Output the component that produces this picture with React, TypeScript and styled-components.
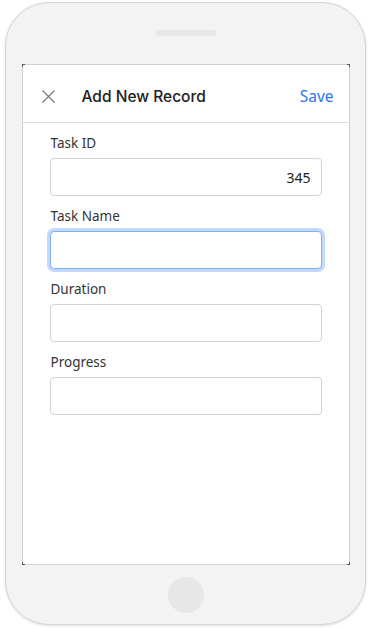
import styled, { createGlobalStyle } from "styled-components";

const GlobalStyle = createGlobalStyle`
  html, body {
    margin: 0;
    padding: 0;
    background: #ffffff;
    font-family: "Noto Sans", "Open Sans", sans-serif;
  }
  * {
    box-sizing: border-box;
  }
`;

const Page = styled.div`
  width: 370px;
  height: 628px;
  padding: 2px 4px 3px 5px;
`;

const Phone = styled.div`
  width: 361px;
  height: 623px;
  display: flex;
  flex-direction: column;
  align-items: center;
  padding-top: 27px;
  background: #f3f3f3;
  border: 1px solid #d4d4d4;
  border-radius: 44px;
  box-shadow: 0 1px 3px rgba(0, 0, 0, 0.12);
`;

const Speaker = styled.div`
  width: 60px;
  height: 6px;
  border-radius: 3px;
  background: #e8e8e8;
`;

const Screen = styled.div`
  position: relative;
  width: 328px;
  height: 501px;
  margin-top: 28px;
  display: flex;
  flex-direction: column;
  background: #ffffff;
  border: 1px solid #d2d2d2;
`;

const Corner = styled.span<{ $v: "top" | "bottom"; $h: "left" | "right" }>`
  position: absolute;
  width: 3px;
  height: 3px;
  ${(p) => p.$v}: -1px;
  ${(p) => p.$h}: -1px;
  border-${(p) => p.$v}: 1px solid #555;
  border-${(p) => p.$h}: 1px solid #555;
`;

const Header = styled.header`
  height: 58px;
  display: flex;
  align-items: center;
  padding: 5px 15px 0 18px;
  border-bottom: 1px solid #dcdcdc;
`;

const CloseButton = styled.button`
  width: 16px;
  height: 16px;
  padding: 0;
  border: none;
  background: none;
  display: flex;
  align-items: center;
  justify-content: center;
  color: #6e7d8c;
  cursor: pointer;
`;

const Title = styled.h1`
  flex: 1;
  margin: 0 0 0 25px;
  font-family: Inter, "Noto Sans", sans-serif;
  font-size: 15.5px;
  font-weight: 500;
  color: #212121;
`;

const SaveButton = styled.button`
  padding: 0;
  border: none;
  background: none;
  font-family: inherit;
  font-size: 15.5px;
  font-weight: 400;
  color: #2f72f3;
  cursor: pointer;
`;

const Form = styled.form`
  display: flex;
  flex-direction: column;
  gap: 10px;
  padding: 10px 27px;
`;

const Field = styled.div`
  display: flex;
  flex-direction: column;
  gap: 5px;
`;

const Label = styled.label`
  line-height: 20px;
  padding-left: 1px;
  font-size: 13.5px;
  color: #333333;
`;

const Input = styled.input<{ $focused?: boolean; $align?: "left" | "right" }>`
  height: 38px;
  width: 100%;
  padding: 0 10px;
  font-family: inherit;
  font-size: 14px;
  color: #222;
  text-align: ${(p) => p.$align ?? "left"};
  background: #fff;
  border: 1px solid ${(p) => (p.$focused ? "#80aef7" : "#ced4da")};
  border-radius: 4px;
  box-shadow: ${(p) => (p.$focused ? "0 0 0 3px #c2d9fc" : "none")};
  outline: none;
`;

const HomeButton = styled.div`
  width: 36px;
  height: 36px;
  margin-top: 12px;
  border-radius: 50%;
  background: #e7e7e7;
`;

const fields = [
  { label: "Task ID", value: "345", align: "right" as const },
  { label: "Task Name", value: "", focused: true },
  { label: "Duration", value: "" },
  { label: "Progress", value: "" },
];

const App = () => {
  return (
    <Page>
      <GlobalStyle />
      <Phone>
        <Speaker />
        <Screen>
          <Corner $v="top" $h="left" />
          <Corner $v="top" $h="right" />
          <Corner $v="bottom" $h="left" />
          <Corner $v="bottom" $h="right" />
          <Header>
            <CloseButton aria-label="Close">
              <svg width="13" height="13" viewBox="0 0 13 13" fill="none" stroke="currentColor" strokeWidth="1.2">
                <path d="M0.5 0.5 L12.5 12.5 M12.5 0.5 L0.5 12.5" />
              </svg>
            </CloseButton>
            <Title>Add New Record</Title>
            <SaveButton type="button">Save</SaveButton>
          </Header>
          <Form>
            {fields.map((f) => (
              <Field key={f.label}>
                <Label>{f.label}</Label>
                <Input
                  defaultValue={f.value}
                  $align={f.align}
                  $focused={f.focused}
                />
              </Field>
            ))}
          </Form>
        </Screen>
        <HomeButton />
      </Phone>
    </Page>
  );
};

export default App;
